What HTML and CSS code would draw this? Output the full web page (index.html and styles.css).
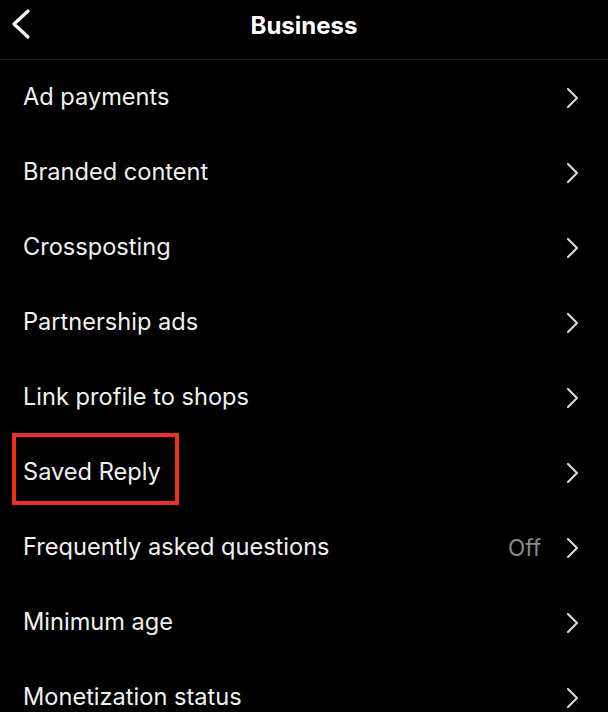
FILE: index.html
```html
<!DOCTYPE html>
<html>
<head>
<meta charset="utf-8">
<link rel="stylesheet" href="styles.css">
</head>
<body>
<div class="screen">
  <header class="topbar">
    <svg class="back" width="24" height="32" viewBox="0 0 24 32"><path d="M18 3 L4 16 L18 29" fill="none" stroke="#fff" stroke-width="3.2" stroke-linecap="round" stroke-linejoin="round"/></svg>
    <h1 class="title">Business</h1>
  </header>
  <ul class="list">
    <li class="row"><span class="label">Ad payments</span><span class="right"><svg class="chev" viewBox="0 0 14 22"><path d="M2 2 L11 11 L2 20" fill="none" stroke="#d6d6d6" stroke-width="2.2" stroke-linecap="round" stroke-linejoin="round"/></svg></span></li>
    <li class="row"><span class="label">Branded content</span><span class="right"><svg class="chev" viewBox="0 0 14 22"><path d="M2 2 L11 11 L2 20" fill="none" stroke="#d6d6d6" stroke-width="2.2" stroke-linecap="round" stroke-linejoin="round"/></svg></span></li>
    <li class="row"><span class="label">Crossposting</span><span class="right"><svg class="chev" viewBox="0 0 14 22"><path d="M2 2 L11 11 L2 20" fill="none" stroke="#d6d6d6" stroke-width="2.2" stroke-linecap="round" stroke-linejoin="round"/></svg></span></li>
    <li class="row"><span class="label">Partnership ads</span><span class="right"><svg class="chev" viewBox="0 0 14 22"><path d="M2 2 L11 11 L2 20" fill="none" stroke="#d6d6d6" stroke-width="2.2" stroke-linecap="round" stroke-linejoin="round"/></svg></span></li>
    <li class="row"><span class="label">Link profile to shops</span><span class="right"><svg class="chev" viewBox="0 0 14 22"><path d="M2 2 L11 11 L2 20" fill="none" stroke="#d6d6d6" stroke-width="2.2" stroke-linecap="round" stroke-linejoin="round"/></svg></span></li>
    <li class="row"><span class="label highlighted">Saved Reply</span><span class="right"><svg class="chev" viewBox="0 0 14 22"><path d="M2 2 L11 11 L2 20" fill="none" stroke="#d6d6d6" stroke-width="2.2" stroke-linecap="round" stroke-linejoin="round"/></svg></span></li>
    <li class="row"><span class="label">Frequently asked questions</span><span class="right"><span class="value">Off</span><svg class="chev" viewBox="0 0 14 22"><path d="M2 2 L11 11 L2 20" fill="none" stroke="#d6d6d6" stroke-width="2.2" stroke-linecap="round" stroke-linejoin="round"/></svg></span></li>
    <li class="row"><span class="label">Minimum age</span><span class="right"><svg class="chev" viewBox="0 0 14 22"><path d="M2 2 L11 11 L2 20" fill="none" stroke="#d6d6d6" stroke-width="2.2" stroke-linecap="round" stroke-linejoin="round"/></svg></span></li>
    <li class="row"><span class="label">Monetization status</span><span class="right"><svg class="chev" viewBox="0 0 14 22"><path d="M2 2 L11 11 L2 20" fill="none" stroke="#d6d6d6" stroke-width="2.2" stroke-linecap="round" stroke-linejoin="round"/></svg></span></li>
  </ul>
</div>
</body>
</html>
```
FILE: styles.css
```css
html, body {
  margin: 0;
  padding: 0;
  background: #000;
}
.screen {
  width: 608px;
  height: 712px;
  overflow: hidden;
  background: #000;
  color: #f2f2f2;
  font-family: Inter, "Liberation Sans", sans-serif;
}
.topbar {
  position: relative;
  height: 59px;
  border-bottom: 1px solid #1f1f1f;
  display: flex;
  align-items: center;
  justify-content: center;
}
.back {
  position: absolute;
  left: 10px;
  top: 8px;
}
.title {
  margin: 0;
  font-size: 24px;
  font-weight: 700;
  color: #fff;
  margin-top: -9px;
}
.list {
  list-style: none;
  margin: 0;
  padding: 0;
}
.row {
  height: 75px;
  display: flex;
  align-items: center;
  justify-content: space-between;
  padding: 0 28px 0 23px;
}
.label {
  font-size: 23.6px;
  line-height: 28px;
  color: #f0f0f0;
  position: relative;
  top: -1px;
}
.highlighted::after {
  content: "";
  position: absolute;
  left: -11px;
  right: -18px;
  top: -25px;
  bottom: -19px;
  border: 4px solid #f0301a;
}
.right {
  display: flex;
  align-items: center;
  gap: 25px;
}
.value {
  font-size: 22.5px;
  color: #8a8a8a;
}
.chev {
  width: 14px;
  height: 22px;
}
```
